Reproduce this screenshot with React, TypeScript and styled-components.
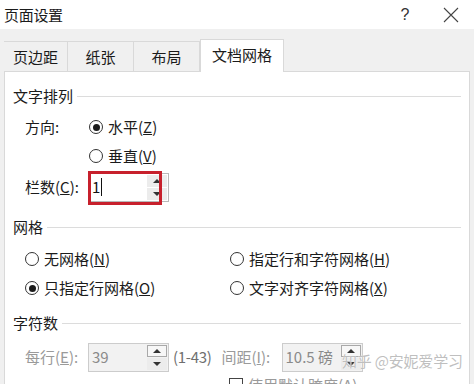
import React from "react";
import styled, { createGlobalStyle } from "styled-components";

const GlobalStyle = createGlobalStyle`
  html, body {
    margin: 0;
    padding: 0;
    background: #f0f0f0;
  }
  body {
    font-family: "Noto Sans CJK SC", "Noto Sans", sans-serif;
  }
`;

// 창 전체
const Window = styled.div`
  position: relative;
  width: 474px;
  height: 384px;
  overflow: hidden;
  background: #f0f0f0;
  display: flex;
  flex-direction: column;
  color: #1b1b1b;
  font-size: 15px;
`;

// 제목 표시줄
const TitleBar = styled.div`
  height: 29px;
  flex-shrink: 0;
  background: #ffffff;
  display: flex;
  align-items: center;
  padding-left: 4px;
`;

const Title = styled.div`
  flex: 1;
  line-height: 20px;
  letter-spacing: -0.3px;
`;

const TitleButton = styled.div<{ $w: number }>`
  width: ${(p) => p.$w}px;
  height: 29px;
  display: flex;
  align-items: center;
  justify-content: center;
  color: #333;
  font-family: "Liberation Sans", sans-serif;
  font-size: 16px;
`;

// 탭
const TabStrip = styled.div`
  height: 42px;
  flex-shrink: 0;
  display: flex;
  align-items: flex-end;
  padding-left: 4px;
  position: relative;
  z-index: 1;
`;

const Tab = styled.div<{ $w: number; $active?: boolean }>`
  width: ${(p) => p.$w}px;
  height: ${(p) => (p.$active ? 33 : 30)}px;
  box-sizing: border-box;
  display: flex;
  align-items: center;
  justify-content: center;
  padding-bottom: ${(p) => (p.$active ? 2 : 0)}px;
  background: ${(p) => (p.$active ? "#ffffff" : "#f0f0f0")};
  border: 1px solid #d9d9d9;
  border-bottom: none;
  border-left: ${(p) => (p.$active ? "1px solid #d9d9d9" : "none")};
  margin-bottom: ${(p) => (p.$active ? -1 : 0)}px;
  line-height: 20px;
`;

// 패널
const Panel = styled.div`
  flex: 1;
  margin: 0 4px;
  background: #ffffff;
  border: 1px solid #d9d9d9;
  padding: 14px 8px 0 8px;
  display: flex;
  flex-direction: column;
`;

const SectionHeader = styled.div<{ $top?: number }>`
  height: 20px;
  flex-shrink: 0;
  margin-top: ${(p) => p.$top ?? 0}px;
  display: flex;
  align-items: center;
  gap: 4px;
  line-height: 20px;
`;

const HeaderLine = styled.div`
  flex: 1;
  height: 1px;
  background: #dcdcdc;
`;

const Row = styled.div<{ $h: number; $top?: number; $indent?: number }>`
  height: ${(p) => p.$h}px;
  flex-shrink: 0;
  margin-top: ${(p) => p.$top ?? 0}px;
  padding-left: ${(p) => p.$indent ?? 12}px;
  display: flex;
  align-items: center;
  line-height: 20px;
  white-space: nowrap;
`;

const FieldLabel = styled.span<{ $w: number; $disabled?: boolean }>`
  width: ${(p) => p.$w}px;
  flex-shrink: 0;
  color: ${(p) => (p.$disabled ? "#9a9a9a" : "#1b1b1b")};
`;

const Option = styled.label<{ $w?: number }>`
  display: flex;
  align-items: center;
  gap: 5px;
  width: ${(p) => (p.$w ? `${p.$w}px` : "auto")};
  flex-shrink: 0;
`;

const RadioCircle = styled.span<{ $checked?: boolean }>`
  width: 14px;
  height: 14px;
  box-sizing: border-box;
  border: 1px solid #333;
  border-radius: 50%;
  display: flex;
  align-items: center;
  justify-content: center;
  &::after {
    content: "";
    width: 7px;
    height: 7px;
    border-radius: 50%;
    background: ${(p) => (p.$checked ? "#1b1b1b" : "transparent")};
  }
`;

const CheckBox = styled.span`
  width: 14px;
  height: 14px;
  box-sizing: border-box;
  border: 1px solid #444;
  flex-shrink: 0;
`;

// 스핀 입력
const SpinField = styled.div<{ $disabled?: boolean }>`
  position: relative;
  width: 81px;
  height: 29px;
  box-sizing: border-box;
  border: 1px solid ${(p) => (p.$disabled ? "#cccccc" : "#b9b9b9")};
  background: ${(p) => (p.$disabled ? "#f2f2f2" : "#ffffff")};
  display: flex;
  align-items: stretch;
  flex-shrink: 0;
`;

const SpinValue = styled.div<{ $disabled?: boolean }>`
  flex: 1;
  padding-left: 3px;
  display: flex;
  align-items: center;
  color: ${(p) => (p.$disabled ? "#8a8a8a" : "#111")};
  font-size: 15px;
  white-space: nowrap;
  overflow: hidden;
`;

const Caret = styled.span`
  width: 1px;
  height: 18px;
  margin-left: 1px;
  background: #111;
`;

const SpinButtons = styled.div`
  width: 20px;
  display: flex;
  flex-direction: column;
  padding: 1px;
  gap: 1px;
`;

const SpinButton = styled.div<{ $boxed?: boolean }>`
  flex: 1;
  display: flex;
  align-items: center;
  justify-content: center;
  box-sizing: border-box;
  border: 1px solid ${(p) => (p.$boxed ? "#a9a9a9" : "transparent")};
  background: ${(p) => (p.$boxed ? "#f7f7f7" : "#ececec")};
`;

const Arrow = styled.span<{ $down?: boolean }>`
  width: 0;
  height: 0;
  border-left: 4px solid transparent;
  border-right: 4px solid transparent;
  ${(p) => (p.$down ? "border-top: 4px solid #333;" : "border-bottom: 4px solid #333;")}
`;

// 빨간 강조 상자
const Highlight = styled.div`
  position: absolute;
  left: -1px;
  top: -3px;
  width: 74px;
  height: 34px;
  box-sizing: border-box;
  border: 3px solid #c7202c;
  pointer-events: none;
`;

const Hint = styled.span<{ $color: string; $ml: number; $mr: number }>`
  color: ${(p) => p.$color};
  margin: 0 ${(p) => p.$mr}px 0 ${(p) => p.$ml}px;
  letter-spacing: -0.3px;
`;

const Watermark = styled.div`
  position: absolute;
  left: 342px;
  top: 350px;
  font-size: 15px;
  line-height: 22px;
  color: rgba(180, 180, 180, 0.85);
  text-shadow: 0 0 1px #ffffff;
  letter-spacing: -0.2px;
  white-space: nowrap;
`;

interface SpinProps {
  value: React.ReactNode;
  disabled?: boolean;
  highlight?: boolean;
}

const Spin = ({ value, disabled, highlight }: SpinProps) => (
  <SpinField $disabled={disabled}>
    <SpinValue $disabled={disabled}>{value}</SpinValue>
    <SpinButtons>
      <SpinButton $boxed={disabled}>
        <Arrow />
      </SpinButton>
      <SpinButton>
        <Arrow $down />
      </SpinButton>
    </SpinButtons>
    {highlight && <Highlight />}
  </SpinField>
);

const Radio = ({ checked, children, w }: { checked?: boolean; children: React.ReactNode; w?: number }) => (
  <Option $w={w}>
    <RadioCircle $checked={checked} />
    <span>{children}</span>
  </Option>
);

export default function App() {
  return (
    <>
      <GlobalStyle />
      <Window>
        <TitleBar>
          <Title>页面设置</Title>
          <TitleButton $w={46}>?</TitleButton>
          <TitleButton $w={46}>
            <svg width="16" height="16" viewBox="0 0 16 16">
              <path d="M1 1 L15 15 M15 1 L1 15" stroke="#444" strokeWidth="1.1" fill="none" />
            </svg>
          </TitleButton>
        </TitleBar>

        <TabStrip>
          <Tab $w={64}>页边距</Tab>
          <Tab $w={66}>纸张</Tab>
          <Tab $w={66}>布局</Tab>
          <Tab $w={84} $active>
            文档网格
          </Tab>
        </TabStrip>

        <Panel>
          <SectionHeader>
            文字排列
            <HeaderLine />
          </SectionHeader>
          <Row $h={28} $top={7}>
            <FieldLabel $w={64}>方向:</FieldLabel>
            <Radio checked>
              水平(<u>Z</u>)
            </Radio>
          </Row>
          <Row $h={30}>
            <FieldLabel $w={64} />
            <Radio>
              垂直(<u>V</u>)
            </Radio>
          </Row>
          <Row $h={32}>
            <FieldLabel $w={63}>
              栏数(<u>C</u>):
            </FieldLabel>
            <Spin
              highlight
              value={
                <>
                  1<Caret />
                </>
              }
            />
          </Row>

          <SectionHeader $top={14}>
            网格
            <HeaderLine />
          </SectionHeader>
          <Row $h={28} $top={8}>
            <Radio w={205}>
              无网格(<u>N</u>)
            </Radio>
            <Radio>
              指定行和字符网格(<u>H</u>)
            </Radio>
          </Row>
          <Row $h={30}>
            <Radio w={205} checked>
              只指定行网格(<u>O</u>)
            </Radio>
            <Radio>
              文字对齐字符网格(<u>X</u>)
            </Radio>
          </Row>

          <SectionHeader $top={10}>
            字符数
            <HeaderLine />
          </SectionHeader>
          <Row $h={32} $top={8}>
            <FieldLabel $w={63} $disabled>
              每行(<u>E</u>):
            </FieldLabel>
            <Spin disabled value="39" />
            <Hint $color="#6f6f6f" $ml={4} $mr={10}>
              (1-43)
            </Hint>
            <FieldLabel $w={60} $disabled>
              间距(<u>I</u>):
            </FieldLabel>
            <Spin disabled value="10.5 磅" />
          </Row>
          <Row $h={24} $indent={216}>
            <Option>
              <CheckBox />
              <FieldLabel $w={140} $disabled>
                使用默认跨度(<u>A</u>)
              </FieldLabel>
            </Option>
          </Row>
        </Panel>

        <Watermark>知乎 @安妮爱学习</Watermark>
      </Window>
    </>
  );
}
